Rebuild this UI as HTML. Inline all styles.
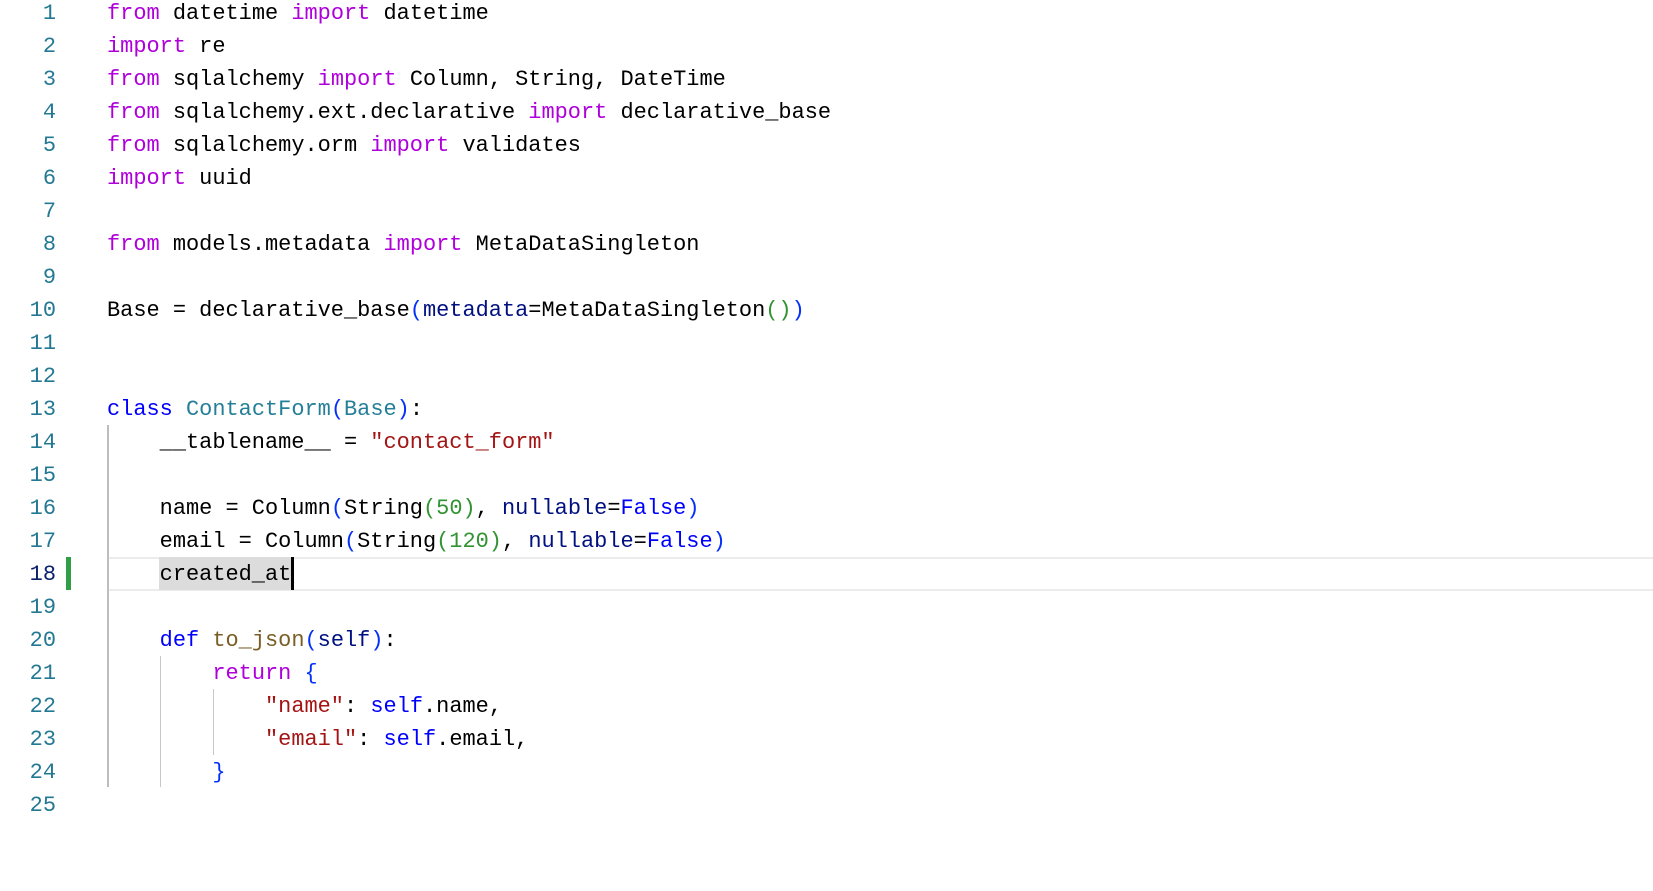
<!DOCTYPE html>
<html><head><meta charset="utf-8"><style>
html,body{margin:0;padding:0;background:#fff;width:1653px;height:891px;overflow:hidden}
body{position:relative;font-family:"Liberation Mono",monospace;font-size:21.95px;}
.ln{position:absolute;left:0;width:56px;text-align:right;color:#237893;}
.cl{position:absolute;left:107px;color:#000;}
.row{height:33px;line-height:33px;white-space:pre}
.k{color:#af00db}.b{color:#0000ff}.t{color:#267f99}.p{color:#0431fa}.g{color:#319331}.s{color:#a31515}.v{color:#001080}.f{color:#795e26}.n{color:#098658}
.guide{position:absolute;width:1px;background:#c8c8c8}
</style></head><body>
<div style="position:absolute;left:108px;top:557px;width:1545px;height:30px;border-top:2px solid #ececec;border-bottom:2px solid #ececec"></div>
<div style="position:absolute;left:66px;top:557px;width:5px;height:33px;background:#2ea043"></div>
<div style="position:absolute;left:159px;top:557px;width:132px;height:33px;background:#dcdcdc"></div>
<div style="position:absolute;left:291px;top:557px;width:3px;height:33px;background:#000"></div>
<div class="guide" style="left:107px;top:425px;height:362px;width:2px;background:#bdbdbd"></div>
<div class="guide" style="left:160px;top:656px;height:131px"></div>
<div class="guide" style="left:213px;top:689px;height:66px"></div>
<div class="ln" style="top:-3.5px">
<div class="row">1</div><div class="row">2</div><div class="row">3</div><div class="row">4</div><div class="row">5</div><div class="row">6</div><div class="row">7</div><div class="row">8</div><div class="row">9</div><div class="row">10</div><div class="row">11</div><div class="row">12</div><div class="row">13</div><div class="row">14</div><div class="row">15</div><div class="row">16</div><div class="row">17</div><div class="row" style="color:#0b216f">18</div><div class="row">19</div><div class="row">20</div><div class="row">21</div><div class="row">22</div><div class="row">23</div><div class="row">24</div><div class="row">25</div>
</div>
<div class="cl" style="top:-3.5px">
<div class="row"><span class="k">from</span> datetime <span class="k">import</span> datetime</div>
<div class="row"><span class="k">import</span> re</div>
<div class="row"><span class="k">from</span> sqlalchemy <span class="k">import</span> Column, String, DateTime</div>
<div class="row"><span class="k">from</span> sqlalchemy.ext.declarative <span class="k">import</span> declarative_base</div>
<div class="row"><span class="k">from</span> sqlalchemy.orm <span class="k">import</span> validates</div>
<div class="row"><span class="k">import</span> uuid</div>
<div class="row"> </div>
<div class="row"><span class="k">from</span> models.metadata <span class="k">import</span> MetaDataSingleton</div>
<div class="row"> </div>
<div class="row">Base = declarative_base<span class="p">(</span><span class="v">metadata</span>=MetaDataSingleton<span class="g">()</span><span class="p">)</span></div>
<div class="row"> </div>
<div class="row"> </div>
<div class="row"><span class="b">class</span> <span class="t">ContactForm</span><span class="p">(</span><span class="t">Base</span><span class="p">)</span>:</div>
<div class="row">    __tablename__ = <span class="s">"contact_form"</span></div>
<div class="row"> </div>
<div class="row">    name = Column<span class="p">(</span>String<span class="g">(50)</span>, <span class="v">nullable</span>=<span class="b">False</span><span class="p">)</span></div>
<div class="row">    email = Column<span class="p">(</span>String<span class="g">(120)</span>, <span class="v">nullable</span>=<span class="b">False</span><span class="p">)</span></div>
<div class="row">    created_at</div>
<div class="row"> </div>
<div class="row">    <span class="b">def</span> <span class="f">to_json</span><span class="p">(</span><span class="v">self</span><span class="p">)</span>:</div>
<div class="row">        <span class="k">return</span> <span class="p">{</span></div>
<div class="row">            <span class="s">"name"</span>: <span class="b">self</span>.name,</div>
<div class="row">            <span class="s">"email"</span>: <span class="b">self</span>.email,</div>
<div class="row">        <span class="p">}</span></div>
<div class="row"> </div>
</div>
</body></html>
